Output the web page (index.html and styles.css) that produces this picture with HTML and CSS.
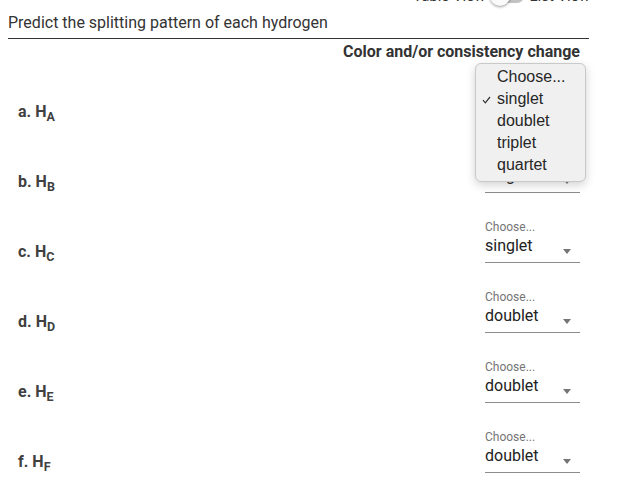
FILE: index.html
```html
<!DOCTYPE html>
<html>
<head>
<meta charset="utf-8">
<link rel="stylesheet" href="styles.css">
</head>
<body>
<div class="page">
  <div class="toggle-row">
    <span class="toggle-text">Table View</span>
    <span class="switch"><span class="track"></span><span class="knob"></span></span>
    <span class="toggle-text">List View</span>
  </div>
  <div class="title">Predict the splitting pattern of each hydrogen</div>
  <div class="col-header">Color and/or consistency change</div>
  <div class="rows">
    <div class="row">
      <div class="label">a. H<sub>A</sub></div>
      <div class="select">
        <div class="sel-label">Choose...</div>
        <div class="sel-value"><span>singlet</span><span class="arrow"></span></div>
        <div class="menu">
          <div class="item">Choose...</div>
          <div class="item"><svg class="check" width="9" height="8" viewBox="0 0 9 8"><polyline points="1,4.2 3.3,6.8 8,1" fill="none" stroke="#333" stroke-width="1.2"/></svg>singlet</div>
          <div class="item">doublet</div>
          <div class="item">triplet</div>
          <div class="item">quartet</div>
        </div>
      </div>
    </div>
    <div class="row">
      <div class="label">b. H<sub>B</sub></div>
      <div class="select">
        <div class="sel-label">Choose...</div>
        <div class="sel-value"><span>singlet</span><span class="arrow"></span></div>
      </div>
    </div>
    <div class="row">
      <div class="label">c. H<sub>C</sub></div>
      <div class="select">
        <div class="sel-label">Choose...</div>
        <div class="sel-value"><span>singlet</span><span class="arrow"></span></div>
      </div>
    </div>
    <div class="row">
      <div class="label">d. H<sub>D</sub></div>
      <div class="select">
        <div class="sel-label">Choose...</div>
        <div class="sel-value"><span>doublet</span><span class="arrow"></span></div>
      </div>
    </div>
    <div class="row">
      <div class="label">e. H<sub>E</sub></div>
      <div class="select">
        <div class="sel-label">Choose...</div>
        <div class="sel-value"><span>doublet</span><span class="arrow"></span></div>
      </div>
    </div>
    <div class="row">
      <div class="label">f. H<sub>F</sub></div>
      <div class="select">
        <div class="sel-label">Choose...</div>
        <div class="sel-value"><span>doublet</span><span class="arrow"></span></div>
      </div>
    </div>
  </div>
</div>
</body>
</html>
```

FILE: styles.css
```css
html, body {
  margin: 0;
  padding: 0;
  background: #ffffff;
}
body {
  font-family: Roboto, "Liberation Sans", Arial, sans-serif;
  color: #333333;
  overflow: hidden;
}
.page {
  padding: 0 8px;
}
.toggle-row {
  display: flex;
  justify-content: flex-end;
  align-items: center;
  height: 20px;
  margin-top: -14px;
  padding-right: 31px;
  gap: 5px;
}
.toggle-text {
  font-size: 15px;
  line-height: 18px;
  color: #333;
}
.switch {
  position: relative;
  width: 34px;
  height: 20px;
}
.track {
  position: absolute;
  left: 0;
  top: 3px;
  width: 34px;
  height: 14px;
  border-radius: 7px;
  background: #c2c2c2;
}
.knob {
  position: absolute;
  left: 0;
  top: 0;
  width: 20px;
  height: 20px;
  border-radius: 50%;
  background: #fafafa;
  box-shadow: 0 1px 3px rgba(0,0,0,0.4);
}
.title {
  margin-top: 8px;
  margin-right: 32px;
  font-size: 16px;
  line-height: 18px;
  padding-bottom: 6px;
  border-bottom: 1px solid #333;
  color: #333;
}
.col-header {
  margin-top: 4px;
  margin-right: 41px;
  text-align: right;
  font-weight: bold;
  font-size: 16px;
  line-height: 18px;
  color: #333;
}
.rows {
  margin-top: 19px;
  display: flex;
  flex-direction: column;
  gap: 27px;
}
.row {
  display: flex;
  justify-content: space-between;
  align-items: flex-end;
  padding-left: 10px;
  padding-right: 41px;
}
.label {
  height: 18px;
  line-height: 18px;
  font-size: 16px;
  font-weight: bold;
  color: #404040;
  margin-bottom: 2px;
  white-space: nowrap;
}
.label sub {
  font-size: 12.5px;
  line-height: 0;
  vertical-align: -4px;
}
.select {
  position: relative;
  width: 95px;
  border-bottom: 1px solid #8c8c8c;
  padding-bottom: 6px;
}
.sel-label {
  font-size: 12px;
  line-height: 14px;
  color: #757575;
}
.sel-value {
  display: flex;
  justify-content: space-between;
  margin-top: 2px;
  font-size: 16px;
  line-height: 20px;
  color: #222;
  padding-right: 9px;
}
.arrow {
  align-self: flex-end;
  margin-bottom: 2px;
  width: 0;
  height: 0;
  border-left: 4.5px solid transparent;
  border-right: 4.5px solid transparent;
  border-top: 5px solid #757575;
}
.menu {
  position: absolute;
  left: -10px;
  top: -17px;
  width: 111px;
  z-index: 10;
  box-sizing: border-box;
  padding: 2px 0 5px 0;
  background: #f0f0f0;
  border: 1px solid #c9c9c9;
  border-radius: 6px;
  box-shadow: 0 3px 10px rgba(0,0,0,0.18);
  font-family: "Liberation Sans", Arial, sans-serif;
  font-size: 16px;
  color: #262626;
}
.item {
  position: relative;
  height: 22px;
  line-height: 22px;
  padding-left: 21px;
  white-space: nowrap;
}
.check {
  position: absolute;
  left: 6px;
  top: 8px;
}
```
